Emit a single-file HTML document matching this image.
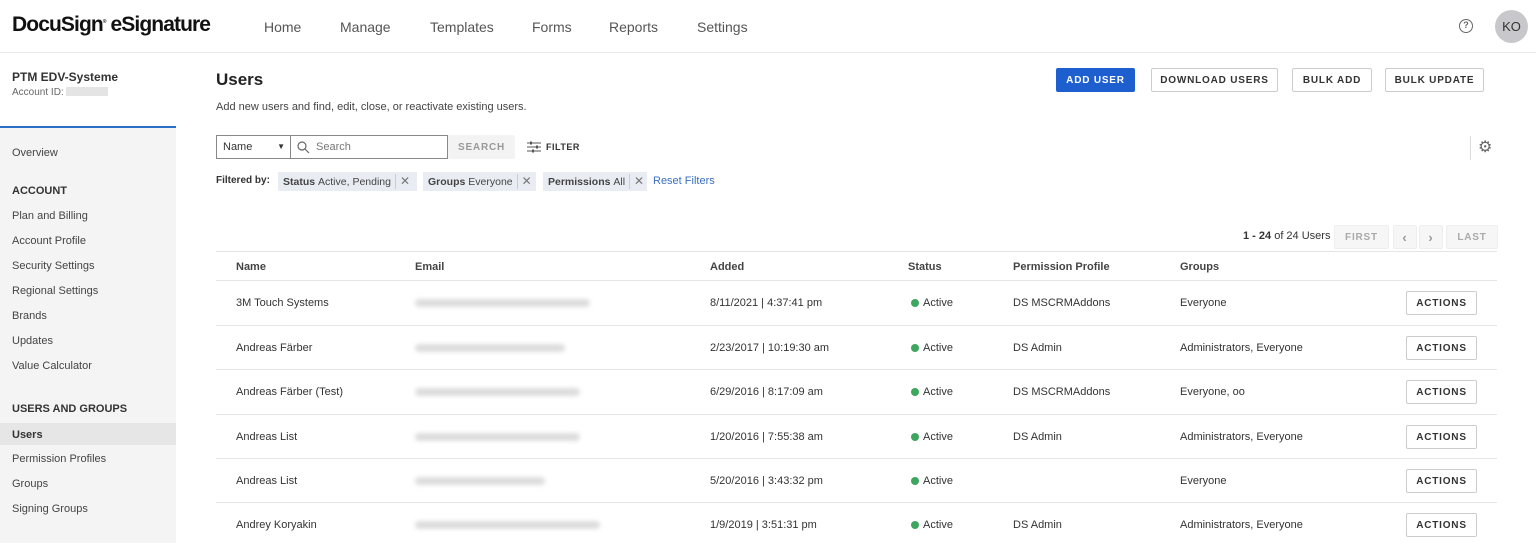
<!DOCTYPE html><html><head><meta charset="utf-8"><style>
*{box-sizing:border-box;margin:0;padding:0}
body{width:1536px;height:543px;overflow:hidden;background:#fff;font-family:"Liberation Sans",sans-serif;color:#333;position:relative;font-size:11px}
.a{position:absolute;white-space:nowrap}
.nav{font-size:14px;color:#555;top:19px}
.side{position:absolute;left:0;top:128px;width:176px;height:415px;background:#f4f4f4}
.sl{position:absolute;left:12px;font-size:11px;color:#444}
.sh{position:absolute;left:12px;font-size:11px;font-weight:bold;color:#333}
.btn{position:absolute;height:24px;border:1px solid #ccc;background:#fff;font-size:10px;font-weight:bold;letter-spacing:.8px;color:#333;display:flex;align-items:center;justify-content:center;border-radius:2px;white-space:nowrap}
.chip{position:absolute;top:172px;height:19px;background:#e9edf3;font-size:10.5px;color:#444;display:flex;align-items:center;padding-left:5px;white-space:nowrap}
.chip span.x{border-left:1px solid #ccc;height:15px;margin-left:4px;padding:0 4px;color:#777;font-size:12px;line-height:15px}
.row{position:absolute;left:216px;width:1281px;border-top:1px solid #e5e5e5}
.c{position:absolute;font-size:11px;color:#333;white-space:nowrap}
.blur{position:absolute;height:8px;background:#ddd;filter:blur(2px);border-radius:4px}
.dot{display:inline-block;width:8px;height:8px;border-radius:50%;background:#3fa660;margin-right:4px;vertical-align:-1px}
.act{position:absolute;left:1190px;width:71px;height:24px;border:1px solid #ccc;border-radius:2px;font-size:10px;font-weight:bold;letter-spacing:.8px;display:flex;align-items:center;justify-content:center;color:#333}
</style></head><body>
<div class="a" style="left:12px;top:13px;font-size:21px;font-weight:bold;color:#111;letter-spacing:-0.9px">DocuSign<sup style="font-size:5px">®</sup> eSignature</div>
<div class="a nav" style="left:264px">Home</div>
<div class="a nav" style="left:340px">Manage</div>
<div class="a nav" style="left:430px">Templates</div>
<div class="a nav" style="left:532px">Forms</div>
<div class="a nav" style="left:609px">Reports</div>
<div class="a nav" style="left:697px">Settings</div>
<div class="a" style="left:1459px;top:19px;width:14px;height:14px;border:1.5px solid #666;border-radius:50%;font-size:9px;text-align:center;line-height:11px;color:#666;font-weight:bold">?</div>
<div class="a" style="left:1495px;top:10px;width:33px;height:33px;border-radius:50%;background:#c8c8cc;font-size:13px;text-align:center;line-height:33px;color:#333">KO</div>
<div class="a" style="left:0;top:52px;width:1536px;height:1px;background:#e8e8e8"></div>
<div class="side"></div>
<div class="a" style="left:0;top:126px;width:176px;height:2px;background:#2d6fc6"></div>
<div class="sh" style="top:70px;font-size:12px">PTM EDV-Systeme</div>
<div class="sl" style="top:87px;font-size:10px;color:#666">Account ID: <span style="display:inline-block;width:42px;height:9px;background:#e4e4e4;vertical-align:-1px"></span></div>
<div class="sl" style="top:147px">Overview</div>
<div class="sh" style="top:185px">ACCOUNT</div>
<div class="sl" style="top:210px">Plan and Billing</div>
<div class="sl" style="top:235px">Account Profile</div>
<div class="sl" style="top:260px">Security Settings</div>
<div class="sl" style="top:285px">Regional Settings</div>
<div class="sl" style="top:310px">Brands</div>
<div class="sl" style="top:335px">Updates</div>
<div class="sl" style="top:360px">Value Calculator</div>
<div class="sh" style="top:403px">USERS AND GROUPS</div>
<div class="a" style="left:0;top:423px;width:176px;height:22px;background:#e6e6e6"></div>
<div class="sh" style="top:429px">Users</div>
<div class="sl" style="top:453px">Permission Profiles</div>
<div class="sl" style="top:478px">Groups</div>
<div class="sl" style="top:503px">Signing Groups</div>

<div class="a" style="left:216px;top:70px;font-size:17px;font-weight:bold;color:#222">Users</div>
<div class="a" style="left:216px;top:101px;font-size:11px;color:#444">Add new users and find, edit, close, or reactivate existing users.</div>
<div class="btn" style="left:1056px;top:68px;width:79px;background:#1e5fd0;border-color:#1e5fd0;color:#fff">ADD USER</div>
<div class="btn" style="left:1151px;top:68px;width:127px">DOWNLOAD USERS</div>
<div class="btn" style="left:1292px;top:68px;width:80px">BULK ADD</div>
<div class="btn" style="left:1385px;top:68px;width:99px">BULK UPDATE</div>

<div class="a" style="left:216px;top:135px;width:75px;height:24px;border:1px solid #888;font-size:11px;padding:5px 6px">Name <span style="position:absolute;right:5px;font-size:8px;top:6px">▼</span></div>
<div class="a" style="left:290px;top:135px;width:158px;height:24px;border:1px solid #888">
<svg class="a" style="left:6px;top:5px" width="13" height="13" viewBox="0 0 13 13"><circle cx="5" cy="5" r="4" fill="none" stroke="#666" stroke-width="1.2"/><path d="M8 8l4 4" stroke="#666" stroke-width="1.2"/></svg>
<span class="a" style="left:25px;top:5px;color:#777">Search</span></div>
<div class="btn" style="left:448px;top:135px;width:67px;background:#f3f3f3;border-color:#f3f3f3;color:#999">SEARCH</div>
<svg class="a" style="left:527px;top:141px" width="14" height="12" viewBox="0 0 14 12"><path d="M0 2h14M0 6h14M0 10h14" stroke="#555" stroke-width="1"/><rect x="3" y="0.5" width="2" height="3" fill="#555"/><rect x="9" y="4.5" width="2" height="3" fill="#555"/><rect x="5" y="8.5" width="2" height="3" fill="#555"/></svg>
<div class="a" style="left:546px;top:142px;font-size:9px;font-weight:bold;letter-spacing:.5px">FILTER</div>
<div class="a" style="left:1470px;top:136px;width:1px;height:24px;background:#ddd"></div>
<div class="a" style="left:1478px;top:137px;font-size:16px;color:#666">⚙</div>

<div class="a" style="left:216px;top:175px;font-weight:bold;font-size:10px">Filtered by:</div>
<div class="chip" style="left:278px;width:139px"><b>Status</b>&nbsp;Active, Pending<span class="x">✕</span></div>
<div class="chip" style="left:423px;width:113px"><b>Groups</b>&nbsp;Everyone<span class="x">✕</span></div>
<div class="chip" style="left:543px;width:104px"><b>Permissions</b>&nbsp;All<span class="x">✕</span></div>
<div class="a" style="left:653px;top:175px;color:#3b6fc0">Reset Filters</div>

<div class="a" style="left:1243px;top:230px"><b>1 - 24</b> of 24 Users</div>
<div class="btn" style="left:1334px;top:225px;width:55px;background:#f6f6f6;border-color:#eee;color:#aaa">FIRST</div>
<div class="btn" style="left:1393px;top:225px;width:24px;background:#f6f6f6;border-color:#eee;color:#999;font-size:13px">‹</div>
<div class="btn" style="left:1419px;top:225px;width:24px;background:#f6f6f6;border-color:#eee;color:#999;font-size:13px">›</div>
<div class="btn" style="left:1446px;top:225px;width:52px;background:#f6f6f6;border-color:#eee;color:#aaa">LAST</div>

<div class="row" style="top:251px;height:30px">
<div class="c" style="left:20px;top:9px;font-weight:bold;color:#444">Name</div>
<div class="c" style="left:199px;top:9px;font-weight:bold;color:#444">Email</div>
<div class="c" style="left:494px;top:9px;font-weight:bold;color:#444">Added</div>
<div class="c" style="left:692px;top:9px;font-weight:bold;color:#444">Status</div>
<div class="c" style="left:797px;top:9px;font-weight:bold;color:#444">Permission Profile</div>
<div class="c" style="left:964px;top:9px;font-weight:bold;color:#444">Groups</div>
</div>

<div class="row" style="top:280px;height:45px"><div class="c" style="left:20px;top:16px">3M Touch Systems</div><div class="blur" style="left:199px;top:18px;width:175px"></div><div class="c" style="left:494px;top:16px">8/11/2021 | 4:37:41 pm</div><div class="c" style="left:695px;top:16px"><span class="dot"></span>Active</div><div class="c" style="left:797px;top:16px">DS MSCRMAddons</div><div class="c" style="left:964px;top:16px">Everyone</div><div class="act" style="top:10px">ACTIONS</div></div>
<div class="row" style="top:325px;height:44px"><div class="c" style="left:20px;top:16px">Andreas Färber</div><div class="blur" style="left:199px;top:18px;width:150px"></div><div class="c" style="left:494px;top:16px">2/23/2017 | 10:19:30 am</div><div class="c" style="left:695px;top:16px"><span class="dot"></span>Active</div><div class="c" style="left:797px;top:16px">DS Admin</div><div class="c" style="left:964px;top:16px">Administrators, Everyone</div><div class="act" style="top:10px">ACTIONS</div></div>
<div class="row" style="top:369px;height:45px"><div class="c" style="left:20px;top:16px">Andreas Färber (Test)</div><div class="blur" style="left:199px;top:18px;width:165px"></div><div class="c" style="left:494px;top:16px">6/29/2016 | 8:17:09 am</div><div class="c" style="left:695px;top:16px"><span class="dot"></span>Active</div><div class="c" style="left:797px;top:16px">DS MSCRMAddons</div><div class="c" style="left:964px;top:16px">Everyone, oo</div><div class="act" style="top:10px">ACTIONS</div></div>
<div class="row" style="top:414px;height:44px"><div class="c" style="left:20px;top:16px">Andreas List</div><div class="blur" style="left:199px;top:18px;width:165px"></div><div class="c" style="left:494px;top:16px">1/20/2016 | 7:55:38 am</div><div class="c" style="left:695px;top:16px"><span class="dot"></span>Active</div><div class="c" style="left:797px;top:16px">DS Admin</div><div class="c" style="left:964px;top:16px">Administrators, Everyone</div><div class="act" style="top:10px">ACTIONS</div></div>
<div class="row" style="top:458px;height:44px"><div class="c" style="left:20px;top:16px">Andreas List</div><div class="blur" style="left:199px;top:18px;width:130px"></div><div class="c" style="left:494px;top:16px">5/20/2016 | 3:43:32 pm</div><div class="c" style="left:695px;top:16px"><span class="dot"></span>Active</div><div class="c" style="left:964px;top:16px">Everyone</div><div class="act" style="top:10px">ACTIONS</div></div>
<div class="row" style="top:502px;height:44px"><div class="c" style="left:20px;top:16px">Andrey Koryakin</div><div class="blur" style="left:199px;top:18px;width:185px"></div><div class="c" style="left:494px;top:16px">1/9/2019 | 3:51:31 pm</div><div class="c" style="left:695px;top:16px"><span class="dot"></span>Active</div><div class="c" style="left:797px;top:16px">DS Admin</div><div class="c" style="left:964px;top:16px">Administrators, Everyone</div><div class="act" style="top:10px">ACTIONS</div></div>
</body></html>
